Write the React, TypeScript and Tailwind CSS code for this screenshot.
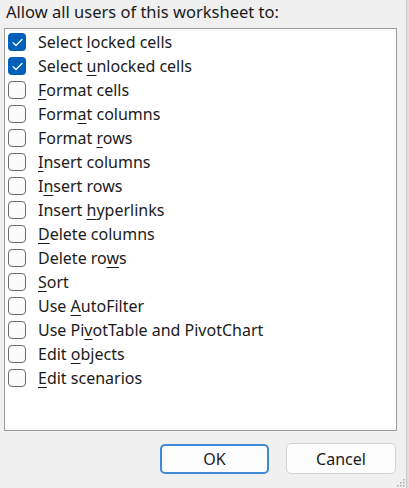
import React from "react"

type Item = {
  label: string
  key: number
  checked?: boolean
}

const items: Item[] = [
  { label: "Select locked cells", key: 7, checked: true },
  { label: "Select unlocked cells", key: 7, checked: true },
  { label: "Format cells", key: 0 },
  { label: "Format columns", key: 4 },
  { label: "Format rows", key: 7 },
  { label: "Insert columns", key: 0 },
  { label: "Insert rows", key: 1 },
  { label: "Insert hyperlinks", key: 7 },
  { label: "Delete columns", key: 0 },
  { label: "Delete rows", key: 9 },
  { label: "Sort", key: 0 },
  { label: "Use AutoFilter", key: 4 },
  { label: "Use PivotTable and PivotChart", key: 6 },
  { label: "Edit objects", key: 5 },
  { label: "Edit scenarios", key: 0 },
]

const Check = ({ checked }: { checked?: boolean }): JSX.Element =>
  checked ? (
    <span className="flex h-[18px] w-[18px] shrink-0 items-center justify-center rounded-[4px] bg-[#005fb8]">
      <svg width="11" height="9" viewBox="0 0 11 9" fill="none">
        <path d="M1 4.6 L4 7.5 L10 1.5" stroke="white" strokeWidth="1.3" strokeLinecap="round" strokeLinejoin="round" />
      </svg>
    </span>
  ) : (
    <span className="h-[18px] w-[18px] shrink-0 rounded-[4px] border border-[#6a6a6a] bg-[#fbfbfb]" />
  )

const Label = ({ item }: { item: Item }): JSX.Element => (
  <span>
    {item.label.slice(0, item.key)}
    <span className="underline underline-offset-[3px]">{item.label[item.key]}</span>
    {item.label.slice(item.key + 1)}
  </span>
)

export default function App(): JSX.Element {
  return (
    <div className="flex h-[488px] w-[409px] bg-[#f0f0f0] font-['Noto_Sans',sans-serif] text-[16px] text-[#1b1b1b]">
      <div className="flex w-[406px] flex-col">
        <div className="h-[28px] pl-[6px] pt-[1px] text-[16.5px] leading-[22px]">Allow all users of this worksheet to:</div>
        <div className="ml-[4px] h-[403px] w-[393px] border border-[#9c9c9c] bg-white pl-[3px] pt-[1px]">
          {items.map((item) => (
            <div key={item.label} className="flex h-[24px] items-center gap-[12px]">
              <Check checked={item.checked} />
              <Label item={item} />
            </div>
          ))}
        </div>
        <div className="mt-[13px] flex gap-[17px] pl-[160px]">
          <button className="h-[30px] w-[109px] rounded-[5px] border-2 border-[#3f8ad8] bg-[#fdfdfd] text-[16px]">OK</button>
          <button className="h-[31px] w-[110px] -translate-y-[1px] rounded-[5px] border border-[#d3d3d3] bg-[#fdfdfd] text-[16px]">
            Cancel
          </button>
        </div>
        <div className="relative flex-1">
          <svg className="absolute bottom-[1px] right-[1px]" width="9" height="9" viewBox="0 0 9 9">
            <rect x="7" y="1" width="1.5" height="1.5" fill="#a8a8a8" />
            <rect x="4" y="4" width="1.5" height="1.5" fill="#a8a8a8" />
            <rect x="7" y="4" width="1.5" height="1.5" fill="#a8a8a8" />
            <rect x="1" y="7" width="1.5" height="1.5" fill="#a8a8a8" />
            <rect x="4" y="7" width="1.5" height="1.5" fill="#a8a8a8" />
            <rect x="7" y="7" width="1.5" height="1.5" fill="#a8a8a8" />
          </svg>
        </div>
      </div>
      <div className="w-[3px] border-l border-[#c9c9c9] bg-[#dedede]" />
    </div>
  )
}
